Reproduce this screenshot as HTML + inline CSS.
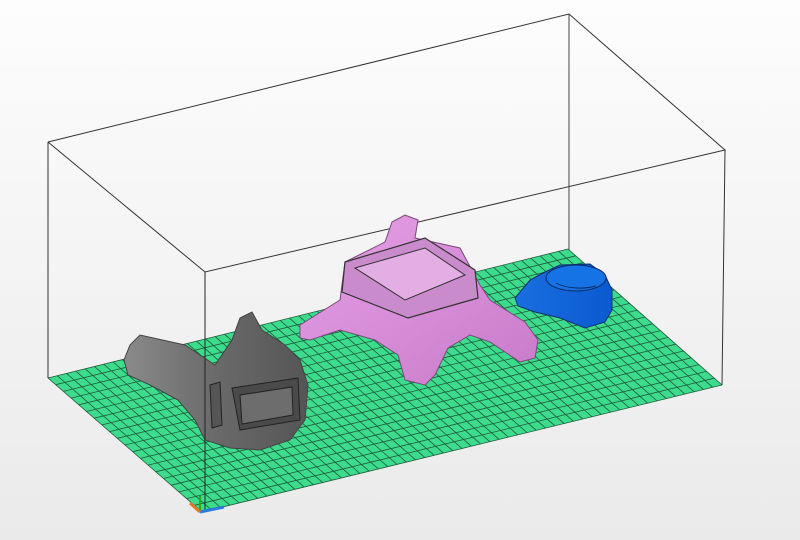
<!DOCTYPE html><html><head><style>html,body{margin:0;padding:0;width:800px;height:540px;overflow:hidden;background:linear-gradient(#fdfdfd,#eaeaea);}</style></head><body>
<svg id="s" width="800" height="540" xmlns="http://www.w3.org/2000/svg">
<defs>
<linearGradient id="gr" x1="0" y1="0" x2="1" y2="0"><stop offset="0" stop-color="#8a8a8a"/><stop offset="0.5" stop-color="#6a6a6a"/><stop offset="1" stop-color="#555"/></linearGradient>
<linearGradient id="pk" x1="0" y1="0" x2="1" y2="1"><stop offset="0" stop-color="#e6a0e6"/><stop offset="1" stop-color="#c77ac9"/></linearGradient>
<linearGradient id="bl" x1="0" y1="0" x2="1" y2="0"><stop offset="0" stop-color="#1a6fe0"/><stop offset="1" stop-color="#0a5ad0"/></linearGradient>
</defs>
<line x1="569" y1="14" x2="569" y2="250" stroke="#444" stroke-width="1"/>
<polygon points="48,378 568,249 722,385 202,512" fill="#3ddc8c"/>
<g id="grid" stroke="#1f5a3c" stroke-width="0.8"></g>
<polyline points="48,142 569,14 725,150 205,272 48,142" fill="none" stroke="#333" stroke-width="1"/>
<line x1="48" y1="142" x2="48" y2="378" stroke="#333"/>
<line x1="725" y1="150" x2="722" y2="385" stroke="#333"/>
<!-- gray part -->
<path d="M130,345 L140,335 L185,345 L215,365 L232,340 L240,318 L252,312 L262,330 L285,345 L300,360 L308,385 L305,420 L290,440 L260,450 L230,448 L205,440 L195,420 L178,400 L150,385 L128,375 L124,360 Z" fill="url(#gr)" stroke="#444" stroke-width="1"/>
<path d="M232,388 L298,378 L300,420 L240,430 Z" fill="#4a4a4a" stroke="#222"/>
<path d="M240,395 L292,387 L293,415 L242,424 Z" fill="#6d6d6d" stroke="#222"/>
<path d="M210,385 L220,382 L222,425 L212,428 Z" fill="#555" stroke="#222"/>
<line x1="205" y1="272" x2="205" y2="510" stroke="#222"/>
<!-- pink part -->
<path d="M300,325 L340,300 L345,262 L385,242 L392,222 L405,215 L418,220 L415,238 L460,248 L480,285 L490,300 L525,322 L538,340 L535,358 L520,362 L490,342 L470,335 L448,348 L435,375 L425,385 L405,380 L398,355 L375,340 L340,330 L310,340 L300,338 Z" fill="url(#pk)" stroke="#7a4a7a" stroke-width="1"/>
<path d="M345,262 L425,238 L475,270 L478,298 L408,318 L342,292 Z" fill="#c98bcb" stroke="#333" stroke-width="1.2"/>
<path d="M355,268 L425,248 L465,275 L405,300 Z" fill="#e2aee3" stroke="#333"/>
<!-- blue part -->
<path d="M515,298 L530,280 L545,272 L560,265 L590,264 L605,275 L612,290 L612,310 L605,322 L585,328 L560,318 L535,312 L518,306 Z" fill="url(#bl)" stroke="#103070" stroke-width="1"/>
<ellipse cx="576" cy="278" rx="30" ry="13" fill="#1673e6" stroke="#0a2a60"/>
<path d="M556,283 A30 13 0 0 0 596,286" fill="none" stroke="#0a2a60"/>
<!-- axes -->
<line x1="200" y1="512" x2="200" y2="496" stroke="#2a2" stroke-width="2"/>
<line x1="200" y1="512" x2="224" y2="507" stroke="#2a7ae0" stroke-width="3"/>
<line x1="200" y1="512" x2="190" y2="503" stroke="#e07a20" stroke-width="3"/>
</svg>
<script>
var g=document.getElementById('grid'),A=[48,378],B=[568,249],C=[722,385],D=[202,512];
function L(p,q){var l=document.createElementNS('http://www.w3.org/2000/svg','line');l.setAttribute('x1',p[0]);l.setAttribute('y1',p[1]);l.setAttribute('x2',q[0]);l.setAttribute('y2',q[1]);g.appendChild(l);}
function m(p,q,t){return [p[0]+(q[0]-p[0])*t,p[1]+(q[1]-p[1])*t];}
var N=56,M=20;
for(var i=0;i<=N;i++){var t=i/N;L(m(A,B,t),m(D,C,t));}
for(var j=0;j<=M;j++){var t=j/M;L(m(A,D,t),m(B,C,t));}
</script>
</body></html>
